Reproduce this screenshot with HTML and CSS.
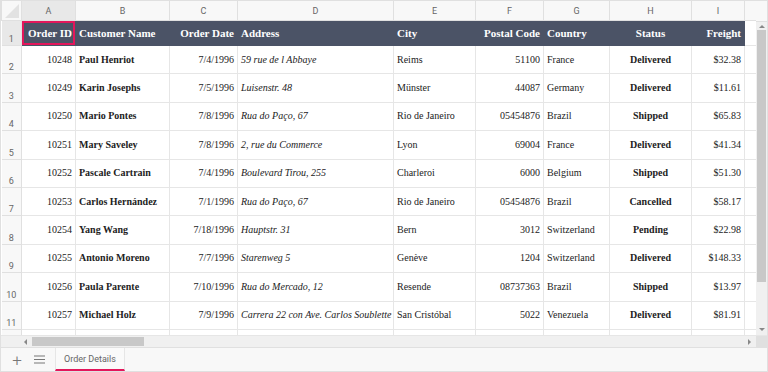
FILE: index.html
```html
<!DOCTYPE html>
<html lang="en">
<head>
    <meta charset="UTF-8">
    <meta name="viewport" content="width=device-width, initial-scale=1.0">
    <title>Order Details</title>
    <link rel="stylesheet" href="styles.css">
</head>
<body>
    <div class="workbook">
        <div class="sheet-area">
            <div class="grid-wrap">
                <table class="grid">
                    <colgroup>
                        <col class="c-hdr"><col class="c-a"><col class="c-b"><col class="c-c"><col class="c-d">
                        <col class="c-e"><col class="c-f"><col class="c-g"><col class="c-h"><col class="c-i"><col class="c-fill">
                    </colgroup>
                    <thead>
                        <tr class="col-heads">
                            <th class="corner"><span class="corner-tri"></span></th>
                            <th class="sel">A</th><th>B</th><th>C</th><th>D</th><th>E</th>
                            <th>F</th><th>G</th><th>H</th><th>I</th><th class="fill"></th>
                        </tr>
                    </thead>
                    <tbody id="rows">
                        <tr class="title-row">
                            <td class="row-num sel">1</td>
                            <td class="hd r active">Order ID</td>
                            <td class="hd">Customer Name</td>
                            <td class="hd r">Order Date</td>
                            <td class="hd">Address</td>
                            <td class="hd">City</td>
                            <td class="hd r">Postal Code</td>
                            <td class="hd">Country</td>
                            <td class="hd c">Status</td>
                            <td class="hd r">Freight</td>
                            <td class="fill"></td>
                        </tr>
                    </tbody>
                </table>
            </div>
            <div class="vscroll">
                <div class="vscroll-top"></div>
                <div class="vscroll-track">
                    <span class="arrow up"></span>
                    <div class="vthumb"></div>
                    <span class="arrow down"></span>
                </div>
            </div>
        </div>
        <div class="hscroll">
            <div class="hscroll-track">
                <span class="arrow left"></span>
                <div class="hthumb"></div>
                <span class="arrow right"></span>
            </div>
            <div class="hscroll-corner"></div>
        </div>
        <div class="tabbar">
            <span class="tab-btn plus">+</span>
            <span class="tab-btn menu">
                <svg width="11" height="9" viewBox="0 0 11 9"><path d="M0 1h11M0 4.5h11M0 8h11" stroke="#777" stroke-width="1.2"/></svg>
            </span>
            <span class="sheet-tab">Order Details</span>
        </div>
    </div>

    <script>
        const orders = [
            ['10248', 'Paul Henriot', '7/4/1996', '59 rue de l Abbaye', 'Reims', '51100', 'France', 'Delivered', '$32.38'],
            ['10249', 'Karin Josephs', '7/5/1996', 'Luisenstr. 48', 'Münster', '44087', 'Germany', 'Delivered', '$11.61'],
            ['10250', 'Mario Pontes', '7/8/1996', 'Rua do Paço, 67', 'Rio de Janeiro', '05454876', 'Brazil', 'Shipped', '$65.83'],
            ['10251', 'Mary Saveley', '7/8/1996', '2, rue du Commerce', 'Lyon', '69004', 'France', 'Delivered', '$41.34'],
            ['10252', 'Pascale Cartrain', '7/4/1996', 'Boulevard Tirou, 255', 'Charleroi', '6000', 'Belgium', 'Shipped', '$51.30'],
            ['10253', 'Carlos Hernández', '7/1/1996', 'Rua do Paço, 67', 'Rio de Janeiro', '05454876', 'Brazil', 'Cancelled', '$58.17'],
            ['10254', 'Yang Wang', '7/18/1996', 'Hauptstr. 31', 'Bern', '3012', 'Switzerland', 'Pending', '$22.98'],
            ['10255', 'Antonio Moreno', '7/7/1996', 'Starenweg 5', 'Genève', '1204', 'Switzerland', 'Delivered', '$148.33'],
            ['10256', 'Paula Parente', '7/10/1996', 'Rua do Mercado, 12', 'Resende', '08737363', 'Brazil', 'Shipped', '$13.97'],
            ['10257', 'Michael Holz', '7/9/1996', 'Carrera 22 con Ave. Carlos Soublette', 'San Cristóbal', '5022', 'Venezuela', 'Delivered', '$81.91']
        ];
        // alignment / style class for each column A..I
        const colClass = ['r', 'b', 'r', 'i', '', 'r', '', 'c b', 'r'];

        const tbody = document.getElementById('rows');
        orders.forEach(function(order, idx) {
            const tr = document.createElement('tr');
            tr.className = 'data-row';
            let html = '<td class="row-num">' + (idx + 2) + '</td>';
            order.forEach(function(val, c) {
                html += '<td class="cell ' + colClass[c] + '">' + val + '</td>';
            });
            html += '<td class="fill"></td>';
            tr.innerHTML = html;
            tbody.appendChild(tr);
        });

        // partially visible row 12
        const last = document.createElement('tr');
        last.className = 'cut-row';
        last.innerHTML = '<td class="row-num"></td>' + '<td class="cell"></td>'.repeat(9) + '<td class="fill"></td>';
        tbody.appendChild(last);
    </script>
</body>
</html>
```
FILE: styles.css
```css
body {
    margin: 0;
    background-color: #fff;
    font-family: Roboto, "Liberation Sans", sans-serif;
}
.workbook {
    width: 768px;
    height: 372px;
    box-sizing: border-box;
    border: 1px solid #e0e0e0;
    display: flex;
    flex-direction: column;
    overflow: hidden;
}
.sheet-area {
    display: flex;
    height: 334px;
}
.grid-wrap {
    width: 755px;
    overflow: hidden;
}
.grid {
    border-collapse: collapse;
    table-layout: fixed;
    width: 756px;
}
.grid th,
.grid td {
    padding: 0;
}
.c-hdr { width: 20px; }
.c-a { width: 54px; }
.c-b { width: 94px; }
.c-c { width: 68px; }
.c-d { width: 156px; }
.c-e { width: 82px; }
.c-f { width: 68px; }
.c-g { width: 66px; }
.c-h { width: 82px; }
.c-i { width: 53px; }
.c-fill { width: 13px; }

.col-heads th {
    height: 19px;
    background-color: #f8f8f8;
    border: 1px solid #e0e0e0;
    border-top: none;
    font-weight: normal;
    font-size: 9px;
    color: #666;
    text-align: center;
}
.col-heads th.sel {
    background-color: #e8e8e8;
}
.corner {
    position: relative;
}
.corner-tri {
    position: absolute;
    right: 2px;
    bottom: 2px;
    width: 0;
    height: 0;
    border-left: 14px solid transparent;
    border-bottom: 14px solid #e2e2e2;
}
.row-num {
    background-color: #f8f8f8;
    border: 1px solid #e0e0e0;
    border-left: none;
    font-size: 9px;
    line-height: 11px;
    color: #666;
    text-align: center;
    vertical-align: bottom;
}
.row-num.sel {
    background-color: #e8e8e8;
}
.title-row td {
    height: 24px;
}
.grid .hd {
    background-color: #4b5366;
    color: #fff;
    font-family: "Liberation Serif", serif;
    font-weight: bold;
    font-size: 11px;
    padding: 0 3px;
    white-space: nowrap;
    overflow: hidden;
    border: 1px solid #4b5366;
}
.hd.active {
    box-shadow: inset 0 0 0 2px #e3165b;
}
.data-row td {
    height: 27.4px;
}
.cut-row td {
    height: 6px;
}
.grid .cell {
    padding: 0 3px;
    border: 1px solid #e6e6e6;
    font-family: "Liberation Serif", serif;
    font-size: 10px;
    line-height: 12px;
    color: #222;
    white-space: nowrap;
    overflow: hidden;
}
.fill {
    border: 1px solid #e6e6e6;
    border-right: none;
}
.col-heads th.fill {
    background-color: #f8f8f8;
}
.r { text-align: right; }
.c { text-align: center; }
.b { font-weight: bold; }
.i { font-style: italic; }

.vscroll {
    width: 11px;
    display: flex;
    flex-direction: column;
}
.vscroll-top {
    height: 20px;
    background-color: #f8f8f8;
    border-bottom: 1px solid #e0e0e0;
}
.vscroll-track {
    flex: 1;
    background-color: #f0f0f0;
    display: flex;
    flex-direction: column;
    align-items: center;
}
.vthumb {
    width: 9px;
    height: 252px;
    margin-top: 2px;
    background-color: #c8c8c8;
}
.arrow {
    width: 0;
    height: 0;
    display: block;
}
.arrow.up {
    margin-top: 3px;
    border-left: 3px solid transparent;
    border-right: 3px solid transparent;
    border-bottom: 3px solid #888;
}
.arrow.down {
    margin-top: auto;
    margin-bottom: 4px;
    border-left: 3px solid transparent;
    border-right: 3px solid transparent;
    border-top: 3px solid #888;
}
.hscroll {
    height: 11px;
    display: flex;
    border-top: 1px solid #e6e6e6;
}
.hscroll-track {
    flex: 1;
    background-color: #f0f0f0;
    display: flex;
    align-items: center;
    padding-left: 23px;
}
.arrow.left {
    border-top: 3px solid transparent;
    border-bottom: 3px solid transparent;
    border-right: 3px solid #888;
}
.hthumb {
    width: 112px;
    height: 9px;
    margin-left: 5px;
    background-color: #c8c8c8;
}
.arrow.right {
    margin-left: auto;
    margin-right: 5px;
    border-top: 3px solid transparent;
    border-bottom: 3px solid transparent;
    border-left: 3px solid #888;
}
.hscroll-corner {
    width: 11px;
    background-color: #e0e0e0;
}
.tabbar {
    flex: 1;
    display: flex;
    align-items: stretch;
    background-color: #f8f8f8;
    border-top: 1px solid #e0e0e0;
}
.tab-btn {
    display: flex;
    align-items: center;
    justify-content: center;
    color: #777;
}
.tab-btn.plus {
    width: 22px;
    margin-left: 5px;
    font-size: 17px;
    font-weight: 300;
}
.tab-btn.menu {
    width: 22px;
}
.sheet-tab {
    display: flex;
    align-items: center;
    margin-left: 5px;
    padding: 0 8px;
    font-size: 9px;
    color: #666;
    background-color: #fafafa;
    border-left: 1px solid #e6e6e6;
    border-right: 1px solid #e6e6e6;
    border-bottom: 2px solid #e3165b;
}
```
